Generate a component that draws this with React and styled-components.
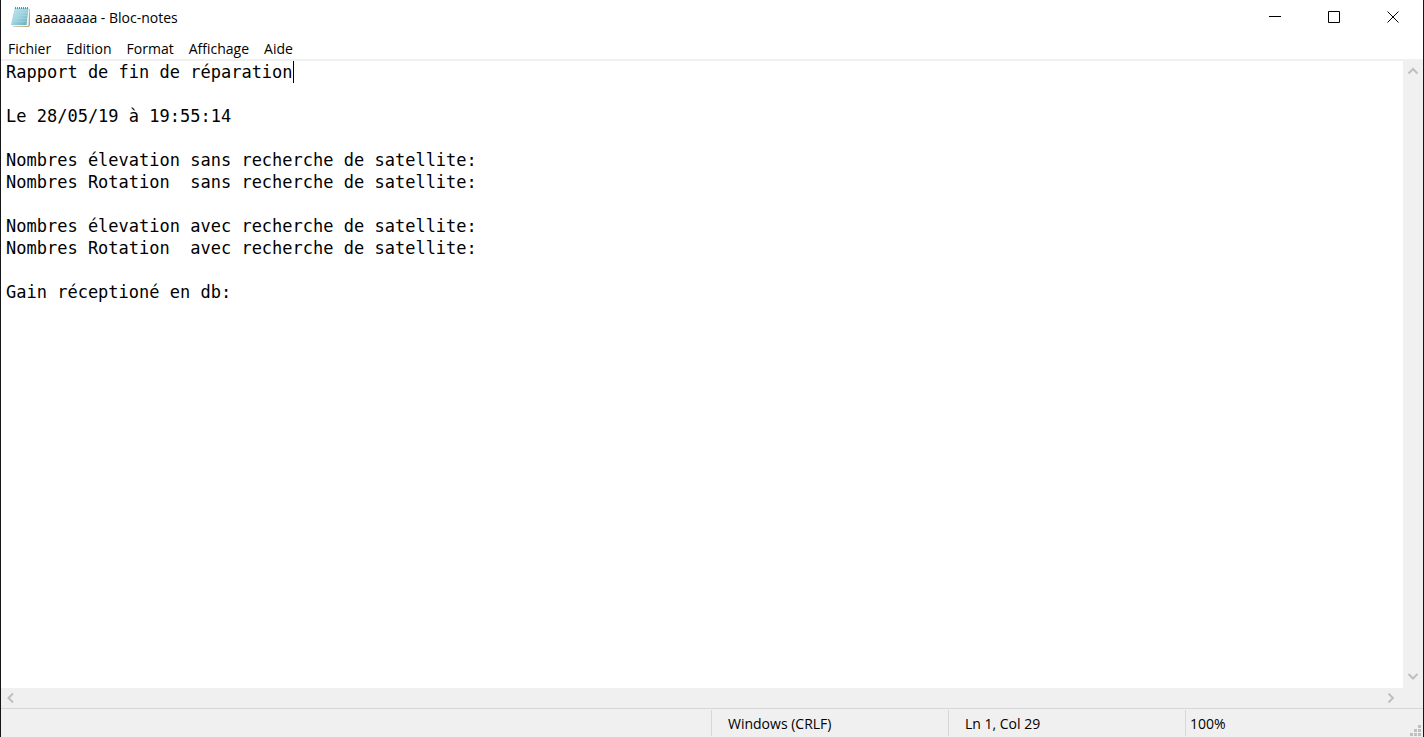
import React, { useState } from 'react';
import styled, { createGlobalStyle } from 'styled-components';

const GlobalStyle = createGlobalStyle`
  * { box-sizing: border-box; }
  body { margin: 0; background: #fff; }
`;

const Window = styled.div`
  display: flex;
  flex-direction: column;
  height: 100vh;
  border: solid #161618;
  border-width: 0 1px;
  background: #fff;
  color: #000;
  font: 14px/20px "Open Sans", "Noto Sans", sans-serif;
  overflow: hidden;
`;

const TitleBar = styled.header`
  display: flex;
  align-items: center;
  height: 34px;
  flex: none;
  padding: 0 1px 0 9px;
`;

const Title = styled.h1`
  flex: 1;
  margin: 0 0 0 4px;
  padding-top: 2px;
  font-size: 14px;
  font-weight: 400;
`;

const CaptionButton = styled.button`
  display: flex;
  align-items: center;
  justify-content: center;
  width: 59px;
  height: 34px;
  padding: 0;
  border: 0;
  background: transparent;
`;

const MenuBar = styled.nav`
  display: flex;
  gap: 15px;
  flex: none;
  height: 27px;
  padding: 4px 7px 0;
  border-bottom: 2px solid #f0f0f0;
`;

const MenuItem = styled.button`
  padding: 0;
  border: 0;
  background: transparent;
  color: inherit;
  font: inherit;
`;

const Editor = styled.main`
  flex: 1;
  min-height: 0;
  display: grid;
  grid-template-columns: 1fr 20px;
  grid-template-rows: 1fr 20px;
  background: #f0f0f0;
`;

const Page = styled.div`
  position: relative;
  display: flex;
  background: #fff;
  font: 17px/22px "DejaVu Sans Mono", monospace;
`;

const TextArea = styled.textarea`
  flex: 1;
  padding: 0 5px;
  border: 0;
  outline: 0;
  resize: none;
  overflow: hidden;
  white-space: pre;
  background: transparent;
  color: inherit;
  font: inherit;
`;

const Caret = styled.span`
  position: absolute;
  top: 0;
  left: calc(5px + ${(p) => p.$column}ch);
  width: 1px;
  height: 22px;
  background: #000;
`;

const ScrollTrack = styled.div`
  display: flex;
  flex-direction: ${(p) => (p.$vertical ? 'column' : 'row')};
  justify-content: space-between;
  padding: ${(p) => (p.$vertical ? '1px 1px 2px 0' : '0 2px 1px 0')};
`;

const ScrollButton = styled.button`
  display: flex;
  align-items: center;
  justify-content: center;
  width: 20px;
  height: 20px;
  padding: 0;
  border: 0;
  background: transparent;
`;

const StatusBar = styled.footer`
  display: grid;
  grid-template-columns: 3fr 1fr 1fr 1fr;
  flex: none;
  height: 29px;
  padding: 1px 0;
  border-top: 1px solid #d7d7d7;
  background: #f0f0f0;
`;

const StatusCell = styled.div`
  display: flex;
  align-items: center;
  justify-content: space-between;
  padding-top: 2px;
  padding-left: ${(p) => (p.$tight ? 4 : 16)}px;
  border-right: ${(p) => (p.$tight ? 0 : 1)}px solid #d7d7d7;
`;

const Grip = styled.svg`
  align-self: flex-end;
  margin-right: 2px;
`;

const arrows = {
  up: 'M1.5 7.5 6 3l4.5 4.5',
  down: 'M1.5 4 6 8.5 10.5 4',
  left: 'M8 1.5 3.5 6 8 10.5',
  right: 'M3.5 1.5 8 6l-4.5 4.5',
};

function Arrow({ dir, label }) {
  return (
    <ScrollButton aria-label={label}>
      <svg width="12" height="12" viewBox="0 0 12 12" fill="none" stroke="#bfbfbf" strokeWidth="2">
        <path d={arrows[dir]} />
      </svg>
    </ScrollButton>
  );
}

function NotepadIcon() {
  return (
    <svg width="21" height="22" viewBox="0 0 21 22" aria-hidden="true">
      <defs>
        <linearGradient id="cover" x1="0" y1="0" x2="1" y2="1">
          <stop offset="0" stopColor="#c4e8ee" />
          <stop offset="0.5" stopColor="#9ed3df" />
          <stop offset="1" stopColor="#62aabd" />
        </linearGradient>
      </defs>
      <path d="M5 3 20 3 20 19.5 18.5 21 3 20.5Z" fill="#b5a57f" />
      <path d="M5 2.5 19.5 2.5 18.5 20 2 20Z" fill="#f4f2e9" />
      <path d="M4.5 2 18.5 2 16.5 19 1 19Z" fill="url(#cover)" />
      <path d="M4.5 6.5h13M4 9.5h13M3.5 12.5h13M3 15.5h13" stroke="#b3dbe3" strokeWidth=".4" />
      <path d="M5.5 1v2M7.5 1v2M9.5 1v2M11.5 1v2M13.5 1v2M15.5 1v2M17.5 1v2" stroke="#77868a" strokeWidth="1" />
    </svg>
  );
}

const captions = [
  ['Réduire', 'M0 5.5h12'],
  ['Agrandir', 'M.5.5h11v11H.5z'],
  ['Fermer', 'M.5.5l11 11M11.5.5l-11 11'],
];

const menus = ['Fichier', 'Edition', 'Format', 'Affichage', 'Aide'];

const report = `Rapport de fin de réparation

Le 28/05/19 à 19:55:14

Nombres élevation sans recherche de satellite:
Nombres Rotation  sans recherche de satellite:

Nombres élevation avec recherche de satellite:
Nombres Rotation  avec recherche de satellite:

Gain réceptioné en db:`;

export default function App() {
  const [text, setText] = useState(report);
  return (
    <Window>
      <GlobalStyle />
      <TitleBar>
        <NotepadIcon />
        <Title>aaaaaaaa - Bloc-notes</Title>
        {captions.map(([label, d]) => (
          <CaptionButton key={label} aria-label={label}>
            <svg width="12" height="12" viewBox="0 0 12 12" fill="none" stroke="#000">
              <path d={d} />
            </svg>
          </CaptionButton>
        ))}
      </TitleBar>
      <MenuBar>
        {menus.map((m) => (
          <MenuItem key={m}>{m}</MenuItem>
        ))}
      </MenuBar>
      <Editor>
        <Page>
          <TextArea
            aria-label="Texte"
            spellCheck={false}
            value={text}
            onChange={(e) => setText(e.target.value)}
          />
          <Caret $column={28} />
        </Page>
        <ScrollTrack $vertical>
          <Arrow dir="up" label="Défiler vers le haut" />
          <Arrow dir="down" label="Défiler vers le bas" />
        </ScrollTrack>
        <ScrollTrack>
          <Arrow dir="left" label="Défiler à gauche" />
          <Arrow dir="right" label="Défiler à droite" />
        </ScrollTrack>
      </Editor>
      <StatusBar>
        <StatusCell />
        <StatusCell>Windows (CRLF)</StatusCell>
        <StatusCell>Ln 1, Col 29</StatusCell>
        <StatusCell $tight>
          100%
          <Grip width="11" height="11" viewBox="0 0 11 11" fill="#bfbfbf" aria-hidden="true">
            <path d="M8 0h3v3H8zM4 4h3v3H4zM8 4h3v3H8zM0 8h3v3H0zM4 8h3v3H4zM8 8h3v3H8z" />
          </Grip>
        </StatusCell>
      </StatusBar>
    </Window>
  );
}
